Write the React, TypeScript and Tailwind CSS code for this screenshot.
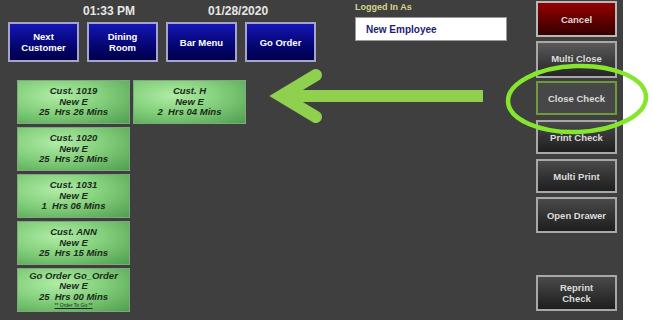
import React from 'react';

const font = { fontFamily: '"Liberation Sans", Arial, sans-serif' };

const navButtons = [
  ['Next', 'Customer'],
  ['Dining', 'Room'],
  ['Bar Menu'],
  ['Go Order'],
];

interface Check {
  name: string;
  server: string;
  time: string;
  note?: string;
}

const leftChecks: Check[] = [
  { name: 'Cust. 1019', server: 'New E', time: '25  Hrs 26 Mins' },
  { name: 'Cust. 1020', server: 'New E', time: '25  Hrs 25 Mins' },
  { name: 'Cust. 1031', server: 'New E', time: '1  Hrs 06 Mins' },
  { name: 'Cust. ANN', server: 'New E', time: '25  Hrs 15 Mins' },
  { name: 'Go Order Go_Order', server: 'New E', time: '25  Hrs 00 Mins', note: '** Order To Go **' },
];

const rightChecks: Check[] = [{ name: 'Cust. H', server: 'New E', time: '2  Hrs 04 Mins' }];

function CheckCard({ check }: { check: Check }) {
  return (
    <div className="w-[113px] h-[44px] flex flex-col items-center justify-center border border-[#7fa87f] bg-[radial-gradient(ellipse_at_35%_35%,#b0eca6_0%,#84d07c_45%,#4f9e4f_100%)] text-[#1c2a1c] font-bold italic text-[9.5px] leading-[10.5px] whitespace-pre">
      <span>{check.name}</span>
      <span>{check.server}</span>
      <span>{check.time}</span>
      {check.note && (
        <span className="text-[5px] leading-[7px] underline not-italic font-normal">{check.note}</span>
      )}
    </div>
  );
}

function SideButton({
  lines,
  className,
}: {
  lines: string[];
  className: string;
}) {
  return (
    <div
      className={`w-[81px] flex flex-col items-center justify-center border-2 text-[9.5px] font-bold leading-[11px] text-[#dcdcdc] ${className}`}
    >
      {lines.map((l) => (
        <span key={l}>{l}</span>
      ))}
    </div>
  );
}

export default function App() {
  return (
    <div className="relative w-[652px] h-[320px] flex overflow-hidden bg-white" style={font}>
      <div className="w-[623px] h-full bg-[#3f3f3f] flex">
        <div className="flex-1 flex flex-col">
          <div className="flex">
            <div className="flex flex-col pl-[8px]">
              <div className="flex h-[22px] pt-[2px] text-[12px] font-bold text-[#e6e6e6]">
                <span className="ml-[75px]">01:33 PM</span>
                <span className="ml-[73px]">01/28/2020</span>
              </div>
              <div className="flex gap-[8px]">
                {navButtons.map((lines) => (
                  <div
                    key={lines.join(' ')}
                    className="w-[71px] h-[40px] flex flex-col items-center justify-center border-2 border-[#a4a4cc] bg-gradient-to-b from-[#1616b4] to-[#00004a] text-white text-[9.5px] font-bold leading-[11px]"
                  >
                    {lines.map((l) => (
                      <span key={l}>{l}</span>
                    ))}
                  </div>
                ))}
              </div>
            </div>
            <div className="ml-[39px] flex flex-col pt-[2px]">
              <span className="text-[9px] font-bold text-[#d8d48c] leading-[10px] h-[15px]">Logged In As</span>
              <div className="w-[152px] h-[24px] bg-white border border-[#9a9a9a] flex items-center pl-[10px] text-[10px] font-bold text-[#1c1c78]">
                New Employee
              </div>
            </div>
          </div>
          <div className="flex gap-[3px] pl-[17px] pt-[18px]">
            <div className="flex flex-col gap-[3px]">
              {leftChecks.map((c) => (
                <CheckCard key={c.name} check={c} />
              ))}
            </div>
            <div className="flex flex-col gap-[3px]">
              {rightChecks.map((c) => (
                <CheckCard key={c.name} check={c} />
              ))}
            </div>
          </div>
        </div>
        <div className="w-[81px] mr-[6px] flex flex-col pt-[1px]">
          <SideButton lines={['Cancel']} className="h-[36px] border-[#b8b8b8] bg-gradient-to-b from-[#960000] to-[#360000]" />
          <SideButton lines={['Multi Close']} className="mt-[4px] h-[37px] pb-[3px] border-[#a8a8a8] bg-gradient-to-b from-[#5a5a5a] to-[#262626]" />
          <SideButton lines={['Close Check']} className="mt-[3px] h-[34px] border-[#6f9a3c] bg-[#474747]" />
          <SideButton lines={['Print Check']} className="mt-[5px] h-[34px] border-[#a8a8a8] bg-gradient-to-b from-[#4a4a4a] to-[#1e1e1e]" />
          <SideButton lines={['Multi Print']} className="mt-[5px] h-[34px] border-[#a8a8a8] bg-gradient-to-b from-[#4a4a4a] to-[#1e1e1e]" />
          <SideButton lines={['Open Drawer']} className="mt-[4px] h-[36px] border-[#a8a8a8] bg-gradient-to-b from-[#4a4a4a] to-[#1e1e1e]" />
          <SideButton lines={['Reprint', 'Check']} className="mt-[42px] h-[36px] border-[#a8a8a8] bg-gradient-to-b from-[#4a4a4a] to-[#1e1e1e]" />
        </div>
      </div>

      {/* annotation overlay */}
      <svg className="absolute inset-0 pointer-events-none" width="652" height="320" viewBox="0 0 652 320">
        <line x1="283" y1="96" x2="483" y2="96" stroke="#8fd14f" strokeWidth="12" />
        <polyline
          points="316,75 281,96 316,117"
          fill="none"
          stroke="#8fd14f"
          strokeWidth="12"
          strokeLinecap="round"
          strokeLinejoin="miter"
        />
        <ellipse
          cx="577"
          cy="99"
          rx="69"
          ry="33"
          transform="rotate(-2 577 99)"
          fill="none"
          stroke="#86e62e"
          strokeWidth="4.5"
        />
      </svg>
    </div>
  );
}
